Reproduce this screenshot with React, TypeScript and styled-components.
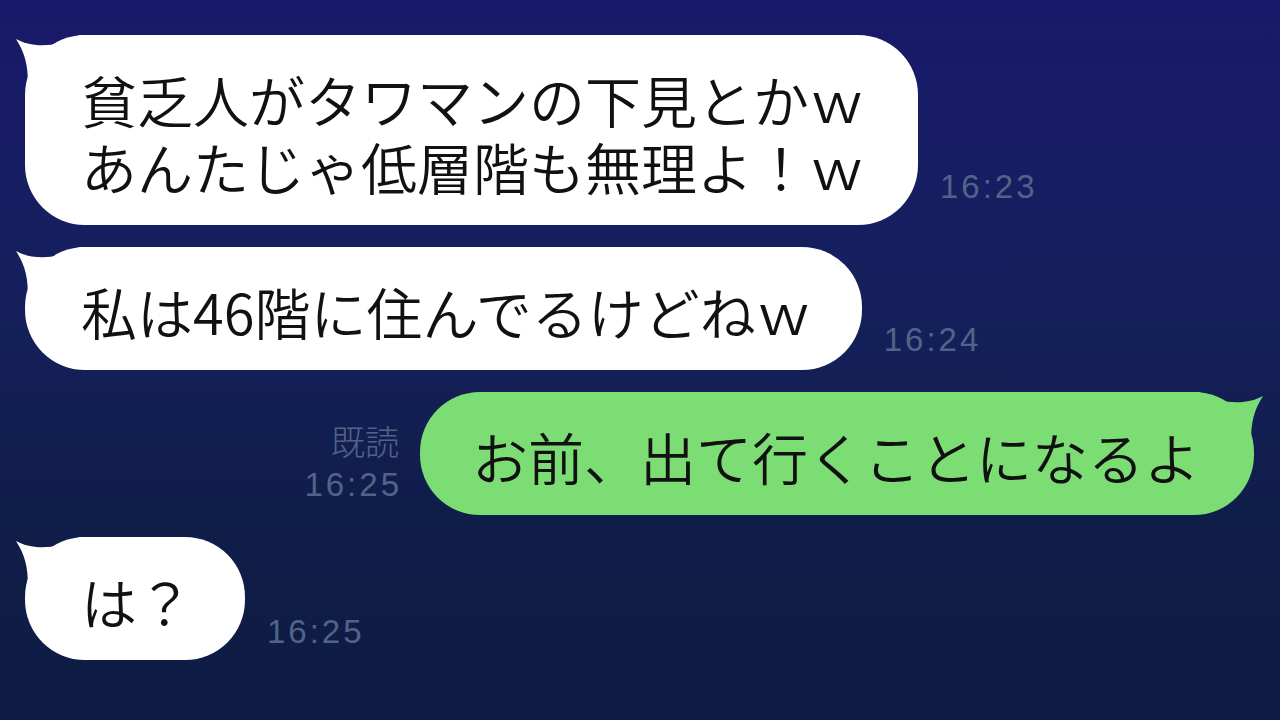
import React from "react";
import styled, { createGlobalStyle } from "styled-components";

const Global = createGlobalStyle`
  html, body { margin: 0; padding: 0; }
  body { background: #0f1c45; }
`;

const Screen = styled.div`
  width: 1280px;
  height: 720px;
  overflow: hidden;
  box-sizing: border-box;
  padding: 35px 26px 0 25px;
  display: flex;
  flex-direction: column;
  gap: 22px;
  background: linear-gradient(180deg, #19196b 0%, #15205c 40%, #0f1d48 75%, #0e1c44 100%);
  font-family: "Noto Sans CJK JP", "Noto Sans", sans-serif;
`;

const Row = styled.div<{ $mine?: boolean }>`
  display: flex;
  align-items: flex-end;
  justify-content: ${(p) => (p.$mine ? "flex-end" : "flex-start")};
  gap: ${(p) => (p.$mine ? "21px" : "22px")};
`;

const Bubble = styled.div<{ $mine?: boolean; $padRight: number }>`
  position: relative;
  background: ${(p) => (p.$mine ? "#7bdd74" : "#ffffff")};
  color: #111;
  border-radius: 60px;
  padding: 30px ${(p) => p.$padRight}px 26px ${(p) => (p.$mine ? "52px" : "56px")};
  font-size: 56px;
  font-weight: 350;
  line-height: 67px;
  white-space: pre;
`;

const TailSvg = styled.svg<{ $mine?: boolean }>`
  position: absolute;
  top: 0;
  ${(p) => (p.$mine ? "right: -10px;" : "left: -10px;")}
  width: 70px;
  height: 50px;
  overflow: visible;
  ${(p) => (p.$mine ? "transform: scaleX(-1);" : "")}
`;

const Meta = styled.div<{ $offset: number }>`
  display: flex;
  flex-direction: column;
  align-items: flex-end;
  margin-bottom: ${(p) => p.$offset}px;
  color: #52638a;
  font-family: "Liberation Sans", "Noto Sans CJK JP", sans-serif;
  font-size: 33px;
  line-height: 44px;
  letter-spacing: 3px;
  margin-right: -3px;
`;

const Read = styled.span`
  font-family: "Noto Sans CJK JP", sans-serif;
  font-size: 34px;
  font-weight: 300;
  letter-spacing: 0;
  margin-right: 3px;
`;

function Tail({ mine, color }: { mine?: boolean; color: string }) {
  return (
    <TailSvg $mine={mine} viewBox="-10 0 70 50">
      <path
        d="M -9 4 C 5 12, 30 14, 55 0 L 62 0 L 62 50 L 3 50 C 3 30, 0 18, -9 4 Z"
        fill={color}
      />
    </TailSvg>
  );
}

type Msg = { text: string; time: string; mine?: boolean; read?: boolean; offset: number; padRight: number };

const messages: Msg[] = [
  { text: "貧乏人がタワマンの下見とかｗ\nあんたじゃ低層階も無理よ！ｗ", time: "16:23", offset: 16, padRight: 53 },
  { text: "私は46階に住んでるけどねｗ", time: "16:24", offset: 8, padRight: 50 },
  { text: "お前、出て行くことになるよ", time: "16:25", mine: true, read: true, offset: 8, padRight: 54 },
  { text: "は？", time: "16:25", offset: 6, padRight: 52 },
];

export default function App() {
  return (
    <>
      <Global />
      <Screen>
        {messages.map((m, i) =>
          m.mine ? (
            <Row key={i} $mine>
              <Meta $offset={m.offset}>
                {m.read && <Read>既読</Read>}
                <span>{m.time}</span>
              </Meta>
              <Bubble $mine $padRight={m.padRight}>
                <Tail mine color="#7bdd74" />
                {m.text}
              </Bubble>
            </Row>
          ) : (
            <Row key={i}>
              <Bubble $padRight={m.padRight}>
                <Tail color="#ffffff" />
                {m.text}
              </Bubble>
              <Meta $offset={m.offset}>
                <span>{m.time}</span>
              </Meta>
            </Row>
          )
        )}
      </Screen>
    </>
  );
}
